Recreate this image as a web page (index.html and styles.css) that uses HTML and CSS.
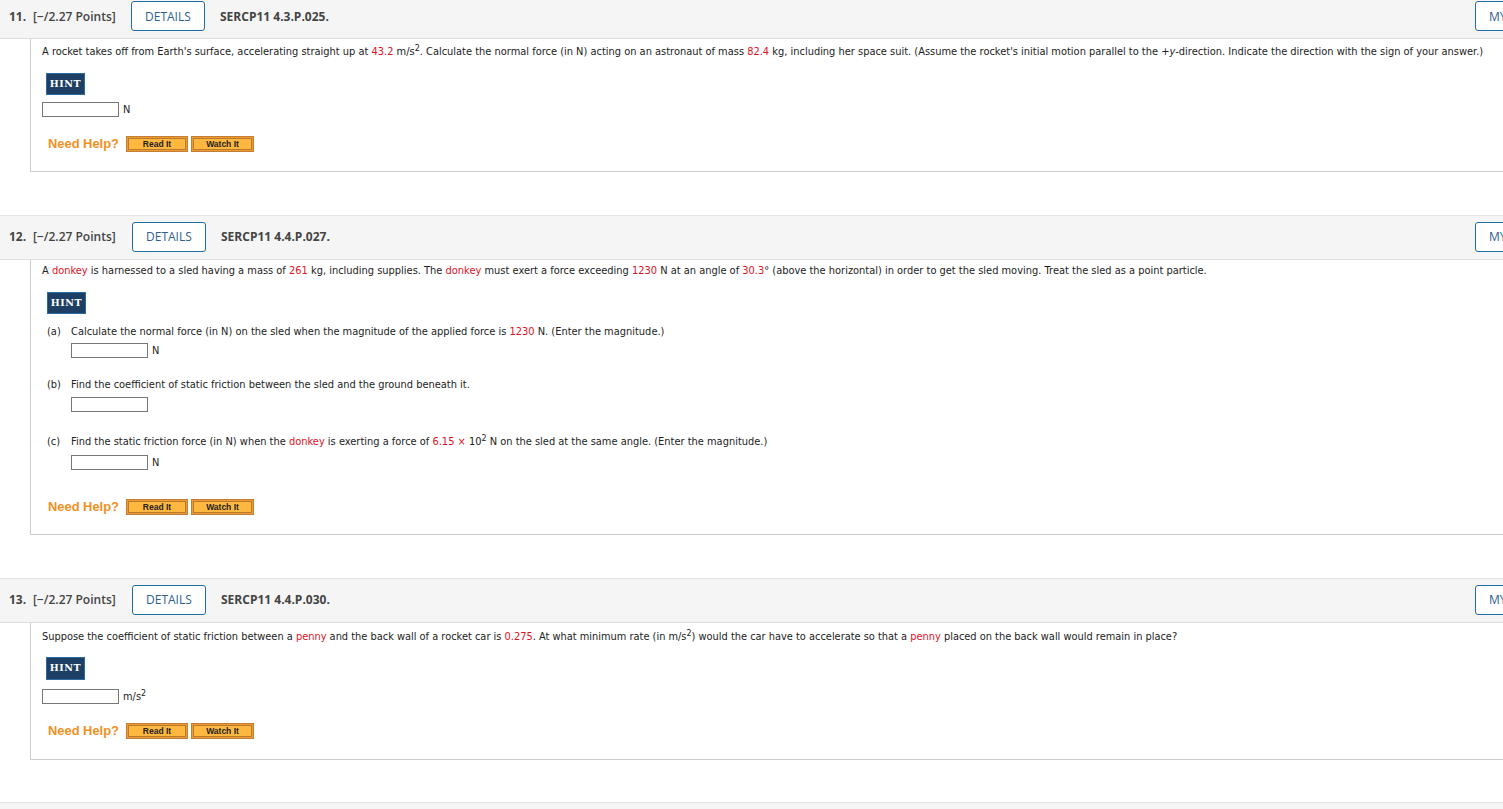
FILE: index.html
```html
<!DOCTYPE html>
<html lang="en">
<head>
  <meta charset="UTF-8">
  <meta name="viewport" content="width=device-width, initial-scale=1.0">
  <title>Assignment Questions</title>
  <link rel="stylesheet" href="styles.css">
</head>
<body>
  <div class="page">

    <section class="question q11">
      <div class="q-header">
        <span class="q-number">11.</span>
        <span class="q-points">[&minus;/2.27 Points]</span>
        <a class="outline-btn details">DETAILS</a>
        <span class="q-code">SERCP11 4.3.P.025.</span>
        <a class="outline-btn notes">MY</a>
      </div>
      <div class="q-body">
        <p class="q-text">A rocket takes off from Earth's surface, accelerating straight up at <span class="red">43.2</span> m/s<sup>2</sup>. Calculate the normal force (in N) acting on an astronaut of mass <span class="red">82.4</span> kg, including her space suit. (Assume the rocket's initial motion parallel to the +<i>y</i>-direction. Indicate the direction with the sign of your answer.)</p>
        <a class="hint">HINT</a>
        <div class="answer"><span class="answer-box"></span><span class="unit">N</span></div>
        <div class="need-help">
          <span class="need-label">Need Help?</span>
          <a class="help-btn read"><span>Read It</span></a>
          <a class="help-btn watch"><span>Watch It</span></a>
        </div>
      </div>
    </section>

    <section class="question q12">
      <div class="q-header">
        <span class="q-number">12.</span>
        <span class="q-points">[&minus;/2.27 Points]</span>
        <a class="outline-btn details">DETAILS</a>
        <span class="q-code">SERCP11 4.4.P.027.</span>
        <a class="outline-btn notes">MY</a>
      </div>
      <div class="q-body">
        <p class="q-text">A <span class="red">donkey</span> is harnessed to a sled having a mass of <span class="red">261</span> kg, including supplies. The <span class="red">donkey</span> must exert a force exceeding <span class="red">1230</span> N at an angle of <span class="red">30.3</span>&deg; (above the horizontal) in order to get the sled moving. Treat the sled as a point particle.</p>
        <a class="hint">HINT</a>
        <div class="part part-a">
          <div class="part-text"><span class="part-label">(a)</span><p>Calculate the normal force (in N) on the sled when the magnitude of the applied force is <span class="red">1230</span> N. (Enter the magnitude.)</p></div>
          <div class="answer"><span class="answer-box"></span><span class="unit">N</span></div>
        </div>
        <div class="part part-b">
          <div class="part-text"><span class="part-label">(b)</span><p>Find the coefficient of static friction between the sled and the ground beneath it.</p></div>
          <div class="answer"><span class="answer-box"></span></div>
        </div>
        <div class="part part-c">
          <div class="part-text"><span class="part-label">(c)</span><p>Find the static friction force (in N) when the <span class="red">donkey</span> is exerting a force of <span class="red">6.15</span> <span class="red">&times;</span> 10<sup>2</sup> N on the sled at the same angle. (Enter the magnitude.)</p></div>
          <div class="answer"><span class="answer-box"></span><span class="unit">N</span></div>
        </div>
        <div class="need-help">
          <span class="need-label">Need Help?</span>
          <a class="help-btn read"><span>Read It</span></a>
          <a class="help-btn watch"><span>Watch It</span></a>
        </div>
      </div>
    </section>

    <section class="question q13">
      <div class="q-header">
        <span class="q-number">13.</span>
        <span class="q-points">[&minus;/2.27 Points]</span>
        <a class="outline-btn details">DETAILS</a>
        <span class="q-code">SERCP11 4.4.P.030.</span>
        <a class="outline-btn notes">MY</a>
      </div>
      <div class="q-body">
        <p class="q-text">Suppose the coefficient of static friction between a <span class="red">penny</span> and the back wall of a rocket car is <span class="red">0.275</span>. At what minimum rate (in m/s<sup>2</sup>) would the car have to accelerate so that a <span class="red">penny</span> placed on the back wall would remain in place?</p>
        <a class="hint">HINT</a>
        <div class="answer"><span class="answer-box"></span><span class="unit">m/s<sup>2</sup></span></div>
        <div class="need-help">
          <span class="need-label">Need Help?</span>
          <a class="help-btn read"><span>Read It</span></a>
          <a class="help-btn watch"><span>Watch It</span></a>
        </div>
      </div>
    </section>

    <div class="q-header next"></div>
  </div>
</body>
</html>
```

FILE: styles.css
```css
* {
  margin: 0;
  padding: 0;
  box-sizing: border-box;
}

html,
body {
  height: 809px;
  overflow: hidden;
  background-color: #fff;
}

body {
  font-family: "DejaVu Sans", Verdana, sans-serif;
  font-size: 9.87px;
  color: #222;
}

/* wider than the window: the notes buttons run off the right edge */
.page {
  width: 1600px;
  margin-top: -6px;
}

.question {
  margin-bottom: 43px;
}

.q-header {
  display: flex;
  align-items: center;
  height: 45px;
  padding: 0 0 1px 9px;
  background-color: #f5f5f5;
  border-top: 1px solid #e4e4e4;
  border-bottom: 1px solid #dedede;
  font-family: "Open Sans", sans-serif;
  font-size: 12px;
  font-weight: 600;
  color: #444;
}

.q-number {
  width: 24px;
  font-weight: 700;
}

.q-points {
  width: 99px;
}

.q11 .q-points {
  width: 98px;
}

.q12 .q-number,
.q12 .q-points,
.q12 .q-code,
.q13 .q-number,
.q13 .q-points,
.q13 .q-code {
  margin-bottom: 2px;
}

.q12 .outline-btn,
.q13 .outline-btn {
  padding-bottom: 2px;
}

.outline-btn {
  display: flex;
  align-items: center;
  height: 30px;
  padding: 0 13px;
  background-color: #fff;
  border: 1px solid #1c6ea4;
  border-radius: 3px;
  font-weight: 400;
  color: #2f5f8f;
}

.details {
  width: 74px;
}

.q-code {
  margin-left: 15px;
  font-weight: 700;
}

.notes {
  position: absolute;
  left: 1475px;
  width: 100px;
}

.q-body {
  margin-left: 30px;
  padding: 6px 0 0 11px;
  border-left: 1px solid #ccc;
  border-bottom: 1px solid #ccc;
}

.q-text {
  line-height: 14px;
}

sup {
  font-size: 8px;
  line-height: 0;
}

.red {
  color: #e0111f;
}

.hint {
  display: block;
  width: 39px;
  height: 22px;
  margin: 14px 0 7px 4px;
  background-color: #1c3f63;
  border: 1px solid #2c6aa0;
  font-family: "DejaVu Serif", serif;
  font-size: 9.5px;
  font-weight: 700;
  letter-spacing: 0.6px;
  line-height: 20px;
  text-align: center;
  color: #fff;
}

.answer {
  display: flex;
  align-items: center;
  height: 15px;
}

.answer-box {
  width: 77px;
  height: 15px;
  background-color: #fff;
  border: 1px solid #777;
}

.unit {
  margin-left: 4px;
}

.need-help {
  display: flex;
  align-items: center;
  height: 16px;
  margin: 19px 0 19px 6px;
}

.need-label {
  width: 76px;
  padding-bottom: 2px;
  font-family: "Liberation Sans", Arial, sans-serif;
  font-size: 12.9px;
  font-weight: 700;
  color: #f0901e;
}

.help-btn {
  display: flex;
  height: 16px;
  padding: 1px;
  background-color: #f39a2e;
  border: 1px solid #c07f35;
  font-family: "Liberation Sans", Arial, sans-serif;
  font-size: 8.5px;
  font-weight: 700;
  color: #222;
}

.help-btn span {
  display: flex;
  align-items: center;
  justify-content: center;
  flex: 1;
  background-color: #ffb83f;
  border: 1px solid #b87a30;
}

.read {
  width: 62px;
  margin-left: 2px;
}

.watch {
  width: 63px;
  margin-left: 3px;
}

/* parts (a), (b), (c) */
.part-text {
  display: flex;
  line-height: 14px;
  margin-left: 5px;
}

.part-label {
  width: 24px;
}

.part .answer {
  margin: 4px 0 0 29px;
}

.part-a {
  margin-top: 11px;
}

.part-b {
  margin-top: 20px;
}

.part-b .answer {
  margin-top: 5px;
}

.part-c {
  margin-top: 23px;
}

.part-c .answer {
  margin-top: 6px;
}

.q12 .q-body {
  padding-top: 4px;
}

.q12 .hint {
  margin: 14px 0 0 5px;
}

.q12 .need-help {
  margin-top: 29px;
}

.q13 {
  margin-bottom: 42px;
}

.q13 .q-body {
  padding-top: 7px;
  font-size: 9.83px;
}

.q13 .hint {
  height: 23px;
  margin-top: 13px;
  margin-bottom: 9px;
}

.q13 .need-help {
  margin-bottom: 20px;
}

.next {
  height: 45px;
}
```
